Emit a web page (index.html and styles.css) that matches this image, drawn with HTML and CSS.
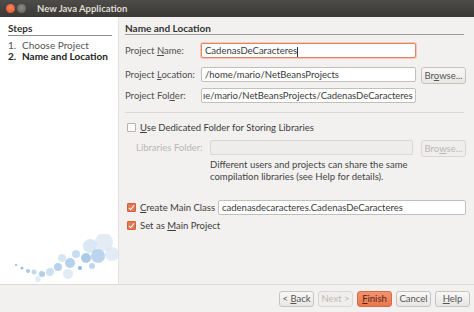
FILE: index.html
```html
<!DOCTYPE html>
<html lang="en">
<head>
    <meta charset="UTF-8">
    <title>New Java Application</title>
    <link rel="stylesheet" href="styles.css">
</head>
<body>
<div class="window">
    <div class="titlebar">
        <span class="btn-close"></span>
        <span class="btn-min"></span>
        <span class="title">New Java Application</span>
    </div>

    <div class="main">
        <div class="steps">
            <h3 class="steps-head">Steps</h3>
            <ol class="step-list">
                <li><span class="num">1.</span>Choose Project</li>
                <li class="current"><span class="num">2.</span>Name and Location</li>
            </ol>
            <svg class="bubbles" width="118" height="50" viewBox="0 0 118 50">
                <circle cx="104" cy="8" r="9" fill="#dde9f4" opacity="0.8"/>
                <circle cx="90" cy="12" r="7" fill="#d0e2f1" opacity="0.8"/>
                <circle cx="112" cy="20" r="7" fill="#d4e4f2" opacity="0.7"/>
                <circle cx="98" cy="22" r="7" fill="#a9cae8" opacity="0.8"/>
                <circle cx="86" cy="24" r="5" fill="#96bee3" opacity="0.8"/>
                <circle cx="76" cy="20" r="4" fill="#c8ddef"/>
                <circle cx="70" cy="29" r="5" fill="#a2c6e7" opacity="0.8"/>
                <circle cx="62" cy="24" r="4" fill="#d6e6f3"/>
                <circle cx="58" cy="33" r="4" fill="#b6d3ed"/>
                <circle cx="68" cy="40" r="5" fill="#e1ecf6"/>
                <circle cx="50" cy="38" r="4" fill="#cfe1f1"/>
                <circle cx="42" cy="40" r="3" fill="#b0cfe9"/>
                <circle cx="34" cy="38" r="2.5" fill="#c0d8ee"/>
                <circle cx="28" cy="37" r="2" fill="#a8c8e5"/>
                <circle cx="22" cy="34" r="1.5" fill="#9dbfdc"/>
                <circle cx="16" cy="31" r="1" fill="#8fb6d8"/>
                <circle cx="38" cy="45" r="3" fill="#e3edf6"/>
                <circle cx="80" cy="34" r="2" fill="#8fb9e0"/>
                <circle cx="92" cy="32" r="3" fill="#bdd6ee"/>
            </svg>
        </div>

        <div class="content">
            <h3 class="section-head">Name and Location</h3>

            <div class="form-grid">
                <label>Project <u>N</u>ame:</label>
                <div class="field focused">CadenasDeCaracteres<span class="caret"></span></div>
                <span></span>

                <label>Project <u>L</u>ocation:</label>
                <div class="field">/home/mario/NetBeansProjects</div>
                <button class="btn">Br<u>o</u>wse...</button>

                <label>Project Fol<u>d</u>er:</label>
                <div class="field clipped">ıe/mario/NetBeansProjects/CadenasDeCaracteres</div>
                <span></span>
            </div>

            <hr class="sep">

            <div class="check-row first">
                <span class="check"></span>
                <span><u>U</u>se Dedicated Folder for Storing Libraries</span>
            </div>

            <div class="lib-grid">
                <label class="disabled">Libraries Folder:</label>
                <div class="field disabled-field"></div>
                <button class="btn disabled">Bro<u>w</u>se...</button>
                <p class="hint">Different users and projects can share the same<br>compilation libraries (see Help for details).</p>
            </div>

            <div class="check-row main-class">
                <span class="check on"></span>
                <span class="mc-label"><u>C</u>reate Main Class</span>
                <div class="field wide">cadenasdecaracteres.CadenasDeCaracteres</div>
            </div>
            <div class="check-row main-project">
                <span class="check on"></span>
                <span>Set as <u>M</u>ain Project</span>
            </div>
        </div>
    </div>

    <div class="footer">
        <button class="btn">&lt; <u>B</u>ack</button>
        <button class="btn disabled">Next &gt;</button>
        <button class="btn primary"><u>F</u>inish</button>
        <button class="btn">Cancel</button>
        <button class="btn"><u>H</u>elp</button>
    </div>
</div>
</body>
</html>
```

FILE: styles.css
```css
body {
    margin: 0;
    font-family: Lato, "Liberation Sans", sans-serif;
    font-size: 9.5px;
    color: #3c3c3c;
    background: #f2f1f0;
}

.window {
    width: 474px;
    height: 312px;
    display: flex;
    flex-direction: column;
    overflow: hidden;
    white-space: nowrap;
}

/* title bar */
.titlebar {
    height: 17px;
    background: linear-gradient(#4d4c48, #3a3935);
    display: flex;
    align-items: center;
    padding-left: 6px;
    flex-shrink: 0;
}

.btn-close, .btn-min {
    width: 9px;
    height: 9px;
    border-radius: 50%;
    margin-right: 2px;
}

.btn-close {
    background: radial-gradient(circle at 50% 40%, #f8875c, #dc4a2a);
}

.btn-min {
    background: radial-gradient(circle at 50% 40%, #8c8a85, #5f5e5a);
}

.title {
    margin-left: 9px;
    color: #dfdbd2;
    font-weight: bold;
}

/* body */
.main {
    flex: 1;
    display: flex;
    min-height: 0;
}

.steps {
    width: 118px;
    flex-shrink: 0;
    background: #fff;
    border-right: 1px solid #e4e2df;
    display: flex;
    flex-direction: column;
}

.steps-head {
    margin: 5px 6px 0 8px;
    line-height: 12px;
    padding-bottom: 1px;
    font-size: 10px;
    font-weight: bold;
    color: #333;
    border-bottom: 1px solid #8f8f8f;
}

.step-list {
    list-style: none;
    margin: 4px 0 0 8px;
    padding: 0;
    line-height: 11px;
    font-size: 10px;
}

.step-list li {
    color: #555;
}

.step-list .num {
    display: inline-block;
    width: 14px;
}

.step-list .current {
    font-weight: bold;
    color: #222;
}

.bubbles {
    margin-top: auto;
    display: block;
}

.content {
    flex: 1;
    padding: 0 8px 0 6px;
}

.section-head {
    margin: 5px 2px 0 0;
    line-height: 12px;
    font-size: 10px;
    font-weight: bold;
    color: #333;
    border-bottom: 1px solid #9d9d9d;
}

.form-grid {
    display: grid;
    grid-template-columns: 71px 215px 1fr;
    grid-template-rows: 24px 21px 15px;
    column-gap: 5px;
    align-items: start;
    margin-top: 8px;
}

label {
    color: #505050;
    line-height: 15px;
}

.field {
    box-sizing: border-box;
    height: 15px;
    line-height: 13px;
    background: #fff;
    border: 1px solid #c2c0bd;
    border-radius: 2px;
    padding: 0 3px;
    overflow: hidden;
    color: #3a3a3a;
}

.form-grid .focused {
    border-color: #e38466;
    box-shadow: 0 0 0 1px #f4c7b7;
}

.caret {
    display: inline-block;
    width: 1px;
    height: 10px;
    background: #333;
    vertical-align: middle;
}

.clipped {
    padding-left: 1px;
}

.btn {
    box-sizing: border-box;
    font-family: inherit;
    font-size: 9.5px;
    height: 17px;
    padding: 0 2px;
    color: #555;
    background: linear-gradient(#f9f8f7, #e8e6e3);
    border: 1px solid #c6c4c1;
    border-radius: 3px;
}

.btn.disabled {
    color: #bcbab7;
    background: #efeeec;
    border-color: #d9d7d4;
}

.sep {
    border: 0;
    border-top: 1px solid #dcdad7;
    margin: 9px 2px 0 0;
}

.check-row {
    display: flex;
    align-items: center;
    margin-left: 2px;
    height: 14px;
}

.check-row.first {
    margin-top: 7px;
}

.check {
    box-sizing: border-box;
    width: 9px;
    height: 9px;
    border: 1px solid #b5b3b0;
    background: #fbfbfb;
    border-radius: 1px;
    margin-right: 4px;
}

.check.on {
    background: #e6784f;
    border-color: #cc6240;
    position: relative;
}

.check.on::after {
    content: "";
    position: absolute;
    left: 2px;
    top: 0;
    width: 2px;
    height: 5px;
    border-right: 1.5px solid #fff;
    border-bottom: 1.5px solid #fff;
    transform: rotate(40deg);
}

.lib-grid {
    display: grid;
    grid-template-columns: 69px 203px 1fr;
    grid-template-rows: 17px auto;
    column-gap: 5px;
    row-gap: 2px;
    align-items: start;
    margin: 6px 0 0 11px;
}

.lib-grid .disabled {
    color: #b9b7b4;
}

.disabled-field {
    background: #eeedeb;
    border-color: #d9d7d4;
}

.lib-grid .btn {
    margin-left: 3px;
}

.hint {
    grid-column: 2 / 4;
    margin: 0;
    line-height: 12px;
    color: #444;
}

.main-class {
    margin-top: 17px;
    height: 15px;
}

.main-project {
    margin-top: 3px;
}

.mc-label {
    width: 78px;
}

.wide {
    flex: 1;
}

/* button bar */
.footer {
    height: 27px;
    flex-shrink: 0;
    border-top: 1px solid #dcdad7;
    display: flex;
    align-items: center;
    justify-content: flex-end;
    gap: 4px;
    padding-right: 4px;
}

.footer .btn {
    width: 35px;
    height: 16px;
}

.footer .primary {
    background: linear-gradient(#f3936f, #e7774f);
    border-color: #d86a47;
    color: #5a2514;
}
```
